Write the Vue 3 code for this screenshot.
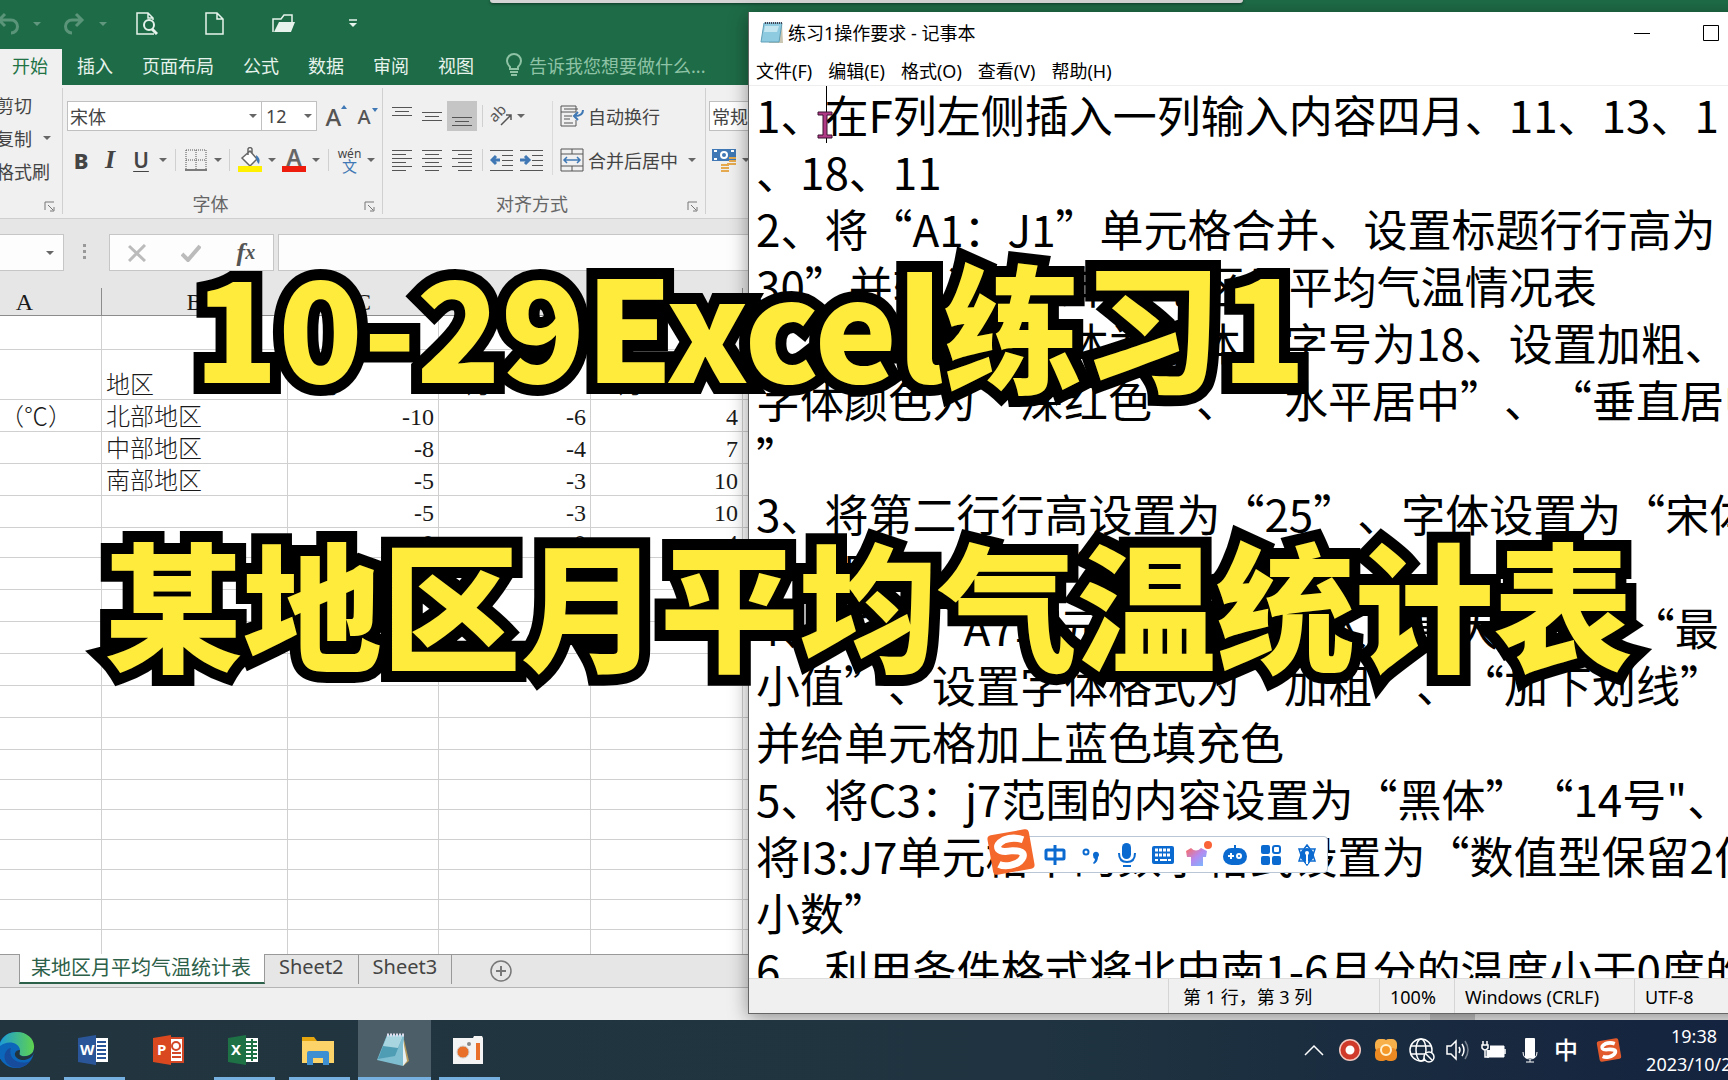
<script setup>
import { ref } from "vue";

const tabs = ["开始", "插入", "页面布局", "公式", "数据", "审阅", "视图"];
const activeTab = ref("开始");

const columns = [
  { name: "A", width: 154 },
  { name: "B", width: 186 },
  { name: "C", width: 151 },
  { name: "D", width: 152 },
  { name: "E", width: 152 },
  { name: "F", width: 152 },
];

const rows = [
  { height: 34, cells: [] },
  { height: 50, cells: ["", "地区", "一月", "二月", "三月"] },
  { height: 32, cells: ["气温（℃）", "北部地区", -10, -6, 4] },
  { height: 32, cells: ["", "中部地区", -8, -4, 7] },
  { height: 32, cells: ["", "南部地区", -5, -3, 10] },
  { height: 32, cells: ["", "", -5, -3, 10] },
  { height: 30, cells: ["", "", 0, 0, 4] },
  { height: 32, cells: [] },
  { height: 32, cells: [] },
  { height: 32, cells: [] },
  { height: 32, cells: [] },
  { height: 32, cells: [] },
  { height: 32, cells: [] },
  { height: 30, cells: [] },
  { height: 30, cells: [] },
  { height: 30, cells: [] },
  { height: 30, cells: [] },
  { height: 30, cells: [] },
  { height: 30, cells: [] },
  { height: 30, cells: [] },
];

const sheets = ["某地区月平均气温统计表", "Sheet2", "Sheet3"];
const activeSheet = ref(sheets[0]);

const menus = ["文件(F)", "编辑(E)", "格式(O)", "查看(V)", "帮助(H)"];

const note = ref(
  [
    "1、在F列左侧插入一列输入内容四月、11、13、1",
    "、18、11",
    "2、将“A1：J1”单元格合并、设置标题行行高为“",
    "30”并输入“某年某地区月平均气温情况表",
    "”、设置标题字体为宋体、字号为18、设置加粗、",
    "字体颜色为“深红色”、“水平居中”、“垂直居中",
    "”",
    "3、将第二行行高设置为“25”、字体设置为“宋体",
    "”、字号“16号”",
    "4、在A6、A7单元格内分别输入“最大值”、“最",
    "小值”、设置字体格式为“加粗”、“加下划线”",
    "并给单元格加上蓝色填充色",
    "5、将C3：j7范围的内容设置为“黑体”“14号\"、",
    "将I3:J7单元格中的数字格式设置为“数值型保留2位",
    "小数”",
    "6、利用条件格式将北中南1-6月分的温度小于0度的",
  ].join("\n")
);

const fontName = ref("宋体");
const fontSize = ref("12");
const numberFormat = ref("常规");
const formula = ref("");
const cellName = ref("");
</script>

<template>
  <div class="desktop">
    <main class="excel">
      <header class="excel-head">
        <div class="quick">
          <button aria-label="撤消">
            <svg width="34" height="24" class="dim"><path d="M9 8h11a6 6 0 0 1 0 13M14 2L8 8l6 6" fill="none" stroke="currentColor" stroke-width="3" /></svg>
          </button>
          <i class="arrow dim"></i>
          <button aria-label="恢复">
            <svg width="24" height="24" class="dim"><path d="M20 8H10a6 6 0 0 0 0 13M14 2l6 6-6 6" fill="none" stroke="currentColor" stroke-width="3" /></svg>
          </button>
          <i class="arrow dim"></i>
          <button aria-label="打印预览">
            <svg width="22" height="24" fill="none" stroke="currentColor" stroke-width="1.5"><path d="M17 8V6l-5-5H1v21h17M12 1v5h5" /><circle cx="13" cy="13" r="5" stroke-width="2" /><path d="M16 17l5 5" stroke-width="3" /></svg>
          </button>
          <button aria-label="新建">
            <svg width="20" height="24" fill="none" stroke="currentColor" stroke-width="1.5"><path d="M1 1h11l6 6v15H1zM12 1v6h6" /></svg>
          </button>
          <button aria-label="打开">
            <svg width="24" height="20"><path d="M1 18V5h8l3-4h8v7" fill="none" stroke="currentColor" stroke-width="1.5" /><path d="M2 18L7 8h16l-4 10z" fill="currentColor" /></svg>
          </button>
          <button aria-label="自定义快速访问工具栏">
            <svg width="10" height="10"><path d="M1 1h8" stroke="currentColor" stroke-width="1.5" /><path d="M1 4h8L5 8z" fill="currentColor" /></svg>
          </button>
        </div>
        <nav class="tabs">
          <button v-for="tab in tabs" :key="tab" class="tab" :class="{ active: tab === activeTab }" @click="activeTab = tab">{{ tab }}</button>
          <button class="tell-me">
            <svg width="18" height="24" fill="none" stroke="currentColor" stroke-width="2"><path d="M5 16v-2C3 12 2 10 2 8a7 7 0 0 1 14 0c0 2-1 4-3 6v2z" /><path d="M5 19h8M6 22h6" /></svg>
            告诉我您想要做什么...
          </button>
        </nav>
      </header>

      <section class="ribbon">
        <div class="group clipboard">
          <div class="clip-list">
            <button>剪切</button>
            <button>复制 <i class="arrow"></i></button>
            <button>格式刷</button>
          </div>
          <svg class="launcher" width="11" height="11"><path d="M1 9V1h9M4 4l5 5M10 6v4H6" /></svg>
        </div>

        <div class="group font">
          <div class="row">
            <label class="combo name"><input v-model="fontName" aria-label="字体" /><i class="arrow"></i></label>
            <label class="combo size"><input v-model="fontSize" aria-label="字号" /><i class="arrow"></i></label>
            <button class="grow" aria-label="增大字号">A<i class="up"></i></button>
            <button class="grow small" aria-label="减小字号">A<i class="down"></i></button>
          </div>
          <div class="row style-row">
            <button class="bold">B</button>
            <button class="italic">I</button>
            <button class="under">U</button>
            <i class="arrow"></i>
            <i class="sep"></i>
            <button aria-label="边框">
              <svg width="22" height="22" fill="none" stroke="#555"><path d="M1 1h20M1 1v20M21 1v20M11 1v20M1 11h20" stroke-dasharray="1 1" /><path d="M0 21h22" stroke-width="1.5" /></svg>
            </button>
            <i class="arrow"></i>
            <i class="sep"></i>
            <button aria-label="填充颜色">
              <svg width="26" height="26"><path d="M5 11l8-7 7 8-7 7zM11 8V2q2-3 4 0v4" fill="#fff" stroke="#666" stroke-width="1.5" /><path d="M19 8q5 3 3 9-3-2-3-9" fill="#3f78b4" /><path d="M1 19h24v6H1z" fill="#fff000" /></svg>
            </button>
            <i class="arrow"></i>
            <button class="color" aria-label="字体颜色">A</button>
            <i class="arrow"></i>
            <i class="sep"></i>
            <button class="pinyin"><span>wén</span><b>文</b></button>
            <i class="arrow"></i>
          </div>
          <div class="caption">字体</div>
          <svg class="launcher" width="11" height="11"><path d="M1 9V1h9M4 4l5 5M10 6v4H6" /></svg>
        </div>

        <div class="group align">
          <div class="row align-row">
            <button aria-label="顶端对齐"><svg width="20" height="22" class="lines"><path d="M0 2h20M3 6h14M0 10h20" /></svg></button>
            <button aria-label="垂直居中"><svg width="20" height="22" class="lines"><path d="M0 7h20M3 11h14M0 15h20" /></svg></button>
            <button class="pressed" aria-label="底端对齐"><svg width="20" height="22" class="lines"><path d="M0 12h20M3 16h14M0 20h20" /></svg></button>
            <i class="sep"></i>
            <button aria-label="方向">
              <svg width="24" height="24"><text x="1" y="14" transform="rotate(-45 9 12)" font-size="15" font-family="Noto Sans" fill="#555">ab</text><path d="M11 21L21 11M16 11h5v5" fill="none" stroke="#555" stroke-width="1.5" /></svg>
            </button>
            <i class="arrow"></i>
          </div>
          <div class="row align-row">
            <button aria-label="左对齐"><svg width="20" height="22" class="lines"><path d="M0 1h20M0 5h14M0 9h20M0 13h14M0 17h20M0 21h14" /></svg></button>
            <button aria-label="居中"><svg width="20" height="22" class="lines"><path d="M0 1h20M3 5h14M0 9h20M3 13h14M0 17h20M3 21h14" /></svg></button>
            <button aria-label="右对齐"><svg width="20" height="22" class="lines"><path d="M0 1h20M6 5h14M0 9h20M6 13h14M0 17h20M6 21h14" /></svg></button>
            <i class="sep"></i>
            <button aria-label="减少缩进"><svg width="24" height="22" class="lines"><path d="M0 1h23M12 6h11M12 11h11M12 16h11M0 21h23" /><path d="M10 11H2M6 7l-4 4 4 4" class="blue" /></svg></button>
            <button aria-label="增加缩进"><svg width="24" height="22" class="lines"><path d="M0 1h23M12 6h11M12 11h11M12 16h11M0 21h23" /><path d="M0 11h8M5 7l4 4-4 4" class="blue" /></svg></button>
          </div>
          <div class="wide">
            <button>
              <svg width="24" height="24" fill="none" stroke="#555"><path d="M1 2h15v6H1zM1 8v14h15v-6M4 5h14M4 12h8M4 15h6M4 19h9" /><path d="M23 6q0 6-8 6M18 8l-4 4 4 4" stroke="#3f78b4" stroke-width="2" /></svg>
              自动换行
            </button>
            <button>
              <svg width="24" height="24" fill="none" stroke="#555"><path d="M1 1h22v22H1zM1 6h22M1 18h22M12 1v5M12 18v5" /><path d="M4 12h16M7 9l-3 3 3 3M17 9l3 3-3 3" stroke="#3f78b4" stroke-width="1.5" /></svg>
              合并后居中 <i class="arrow"></i>
            </button>
          </div>
          <div class="caption">对齐方式</div>
          <svg class="launcher" width="11" height="11"><path d="M1 9V1h9M4 4l5 5M10 6v4H6" /></svg>
        </div>

        <div class="group number">
          <label class="combo"><input v-model="numberFormat" aria-label="数字格式" /></label>
          <button class="money" aria-label="会计数字格式">
            <svg width="24" height="24"><path d="M0 1h24v12H0z" fill="#3f78b4" /><path d="M2 3h3M19 3h3M2 11h3" stroke="#fff" stroke-width="2" /><circle cx="12" cy="7" r="4" fill="#fff" /><circle cx="12" cy="7" r="2" fill="#3f78b4" /><path d="M8 16h16v8H8z" fill="#f0f0f0" /><path d="M17 10h7M17 13h7M15 16h9M9 17h8M9 20h8M9 23h8" stroke="#e5a94f" stroke-width="2" /></svg>
            <i class="arrow"></i>
          </button>
        </div>
      </section>

      <section class="formula-bar">
        <label class="name-box"><input v-model="cellName" aria-label="名称框" /><i class="arrow"></i></label>
        <svg class="dots" width="4" height="18" fill="#999"><path d="M0 1h3v3H0zM0 7h3v3H0zM0 13h3v3H0z" /></svg>
        <div class="fx-buttons">
          <button aria-label="取消"><svg width="18" height="18"><path d="M1 2l16 15M17 1L1 17" stroke="#bbb" stroke-width="3" /></svg></button>
          <button aria-label="输入"><svg width="20" height="18"><path d="M1 10l6 6L19 2" fill="none" stroke="#bbb" stroke-width="4" /></svg></button>
          <button class="fx">f<sub>x</sub></button>
        </div>
        <input v-model="formula" class="formula" aria-label="编辑栏" />
      </section>

      <div class="sheet">
        <table>
          <colgroup>
            <col v-for="col in columns" :key="col.name" :style="{ width: col.width + 'px' }" />
          </colgroup>
          <thead>
            <tr>
              <th v-for="col in columns" :key="col.name">{{ col.name }}</th>
            </tr>
          </thead>
          <tbody>
            <tr v-for="(row, r) in rows" :key="r" :style="{ height: row.height + 'px' }">
              <td v-for="(col, c) in columns" :key="col.name" :class="{ num: typeof row.cells[c] === 'number' }">{{ row.cells[c] }}</td>
            </tr>
          </tbody>
        </table>
      </div>

      <nav class="sheet-tabs">
        <button v-for="sheet in sheets" :key="sheet" :class="{ active: sheet === activeSheet }" @click="activeSheet = sheet">{{ sheet }}</button>
        <button class="add" aria-label="新工作表">
          <svg width="22" height="22" fill="none" stroke="#777"><circle cx="11" cy="11" r="10" stroke-width="1.5" /><path d="M11 6v10M6 11h10" stroke-width="2" /></svg>
        </button>
      </nav>
      <footer class="excel-status"><i class="view"></i></footer>
    </main>

    <div class="share-bar"></div>

    <section class="notepad">
      <header class="note-title">
        <svg width="24" height="24"><path d="M5 3h17l1 19H9z" fill="#c9c5b0" /><path d="M4 2h18l-3 19H1z" fill="#8ecbe0" stroke="#5f9fb8" /><path d="M5 5h14l-2 6H4z" fill="#c4e6f0" /><path d="M5 2h17" stroke="#445" stroke-width="2" stroke-dasharray="1 1" /></svg>
        <h1>练习1操作要求 - 记事本</h1>
        <button aria-label="最小化"><svg width="16" height="16"><path d="M0 8.5h16" stroke="#000" /></svg></button>
        <button aria-label="最大化"><svg width="16" height="16"><path d="M.5.5h15v15H.5z" fill="none" stroke="#000" /></svg></button>
        <button aria-label="关闭"><svg width="16" height="16"><path d="M1 1l14 14M15 1L1 15" stroke="#000" /></svg></button>
      </header>
      <nav class="note-menu">
        <button v-for="menu in menus" :key="menu">{{ menu }}</button>
      </nav>
      <div class="note-body">
        <textarea v-model="note" wrap="off" spellcheck="false" aria-label="文本编辑器"></textarea>
        <i class="caret"></i>
        <svg class="ibeam" width="16" height="28"><path d="M1 1h14v3h-5v20h5v3H1v-3h5V4H1z" fill="#b03a86" stroke="#3a1030" /></svg>
      </div>
      <footer class="note-status">
        <span class="pos">第 1 行，第 3 列</span>
        <span class="zoom">100%</span>
        <span class="eol">Windows (CRLF)</span>
        <span class="enc">UTF-8</span>
      </footer>
    </section>

    <div class="ime">
      <svg class="sogou" width="50" height="48" viewBox="0 0 50 48"><g transform="rotate(-10 25 24)"><rect x="4" y="4" width="42" height="40" rx="4" fill="#f4682c" /><path d="M39 14Q30 9 20 11q-9 3-7 8 2 4 14 4 12 2 9 8-4 6-14 6-7 0-11-3" fill="none" stroke="#fff" stroke-width="7" /></g></svg>
      <button aria-label="中文"><svg width="22" height="22" fill="none" stroke="#0b6ad0" stroke-width="3"><rect x="2" y="6" width="18" height="9" rx="1" /><path d="M11 1v20" /></svg></button>
      <button aria-label="标点"><svg width="20" height="20"><circle cx="5" cy="7" r="2.5" fill="none" stroke="#0b6ad0" stroke-width="2" /><path d="M12 10a3 3 0 1 1 5 2q0 5-4 7l-1-1q2-2 2-4-2-1-2-4" fill="#0b6ad0" /></svg></button>
      <button aria-label="语音"><svg width="20" height="26"><rect x="5" y="1" width="9" height="16" rx="4.5" fill="#0b6ad0" /><path d="M2 11q0 9 8 9t8-9M6 24h8" fill="none" stroke="#0b6ad0" stroke-width="2" /></svg></button>
      <button aria-label="键盘"><svg width="24" height="20"><rect x="1" y="1" width="22" height="18" rx="2" fill="#0b6ad0" /><path d="M4 5h16M4 10h16" stroke="#fff" stroke-width="3" stroke-dasharray="3 1" /><path d="M4 15h3M9 15h7M17 15h3" stroke="#fff" stroke-width="2" /></svg></button>
      <button aria-label="皮肤">
        <svg width="28" height="28"><defs><linearGradient id="shirt" x1="0" y1="0" x2="1" y2="1"><stop offset="0" stop-color="#ff6a5e" /><stop offset=".5" stop-color="#b48af0" /><stop offset="1" stop-color="#6ec0ff" /></linearGradient></defs><path d="M1 10l5-3q5 5 10 0l6 3-1 6h-3v9H6v-9H2z" fill="url(#shirt)" /><circle cx="23" cy="4" r="4" fill="#fa6237" /></svg>
      </button>
      <button aria-label="游戏"><svg width="24" height="22"><path d="M12 1v4" stroke="#0b6ad0" stroke-width="2" /><rect x="0" y="4" width="24" height="17" rx="8.5" fill="#0b6ad0" /><path d="M5 12h6M8 9v6" stroke="#fff" stroke-width="2" /><circle cx="16" cy="12" r="2" fill="none" stroke="#fff" stroke-width="2" /></svg></button>
      <button aria-label="工具箱"><svg width="20" height="20" fill="#0b6ad0"><rect width="9" height="9" rx="2" /><rect y="11" width="9" height="9" rx="2" /><rect x="11" y="11" width="9" height="9" rx="2" /><rect x="12" y="1" width="7" height="7" rx="2" fill="none" stroke="#0b6ad0" stroke-width="2" /></svg></button>
      <button aria-label="智能助手"><svg width="22" height="22"><path d="M11 1l3 4h5l-2 6 2 6h-5l-3 4-3-4H3l2-6-2-6h5z" fill="none" stroke="#0b6ad0" stroke-width="1.5" /><circle cx="11" cy="11" r="7" fill="#0b6ad0" /><circle cx="11" cy="9" r="2" fill="#fff" /><path d="M11 10v10" stroke="#fff" stroke-width="2" /></svg></button>
    </div>

    <footer class="taskbar">
      <button class="task open" aria-label="Edge">
        <svg width="40" height="40"><defs><linearGradient id="edge" x1="0" y1="0" x2="1" y2="0"><stop offset="0" stop-color="#1c9ad8" /><stop offset="1" stop-color="#5fd34e" /></linearGradient></defs><circle cx="18" cy="20" r="18" fill="#0c66ba" /><path d="M1 17C3 7 10 2 19 2c10 0 18 7 17 16 0 6-6 9-12 8-4-1-2-3-2-6-1-9-15-10-21-3" fill="url(#edge)" /><path d="M13 18c-3 8 4 17 17 14l3-2c-5 8-16 10-22 5-7-5-5-16 2-17" fill="#174c9c" /><path d="M22 20c0 3-2 5 2 6 6 1 12-2 12-8v5c-3 7-12 9-17 5-4-3-2-8 3-8" fill="#22353f" /></svg>
      </button>
      <button class="task open" aria-label="Word">
        <svg width="32" height="32"><path d="M17 4h14v24H17z" fill="#fff" /><path d="M20 8h9M20 12h9M20 16h9M20 20h9M20 24h9" stroke="#2a5699" stroke-width="2" /><path d="M1 4l18-3v30L1 28z" fill="#2a5699" /><text x="3" y="21" class="logo">W</text></svg>
      </button>
      <button class="task" aria-label="PowerPoint">
        <svg width="32" height="32"><path d="M17 4h14v24H17z" fill="#fff" stroke="#d24726" stroke-width="2" /><path d="M20 19h9M20 23h9" stroke="#d24726" stroke-width="2" /><circle cx="24" cy="12" r="4" fill="none" stroke="#d24726" stroke-width="2" /><path d="M1 4l18-3v30L1 28z" fill="#d9481f" /><text x="5" y="21" class="logo">P</text></svg>
      </button>
      <button class="task open" aria-label="Excel">
        <svg width="32" height="32"><path d="M17 4h14v24H17z" fill="#fff" /><path d="M19 8h11M19 12h11M19 16h11M19 20h11M19 24h11M25 5v22" stroke="#1e7145" stroke-width="2" /><path d="M1 4l18-3v30L1 28z" fill="#1e7145" /><text x="4" y="21" class="logo">X</text></svg>
      </button>
      <button class="task open" aria-label="文件资源管理器">
        <svg width="34" height="30"><path d="M1 2h12l3 4h17v22H1z" fill="#e5a50f" /><path d="M1 6h32v22H1z" fill="#fcd368" /><path d="M6 30V18q0-2 2-2h18q2 0 2 2v12h-6v-7H12v7z" fill="#3d8fd1" /></svg>
      </button>
      <button class="task open current" aria-label="记事本">
        <svg width="36" height="36"><path d="M28 3l6 26-6 5z" fill="#b59a5c" /><path d="M12 3h17l-1 31-26-6z" fill="#7fbdd0" /><path d="M12 4h16l-8 20-17 3z" fill="#4f9db5" /><path d="M12 4h16l-5 12-15-2z" fill="#a9d5e0" /><path d="M28 8v26l4-5z" fill="#e8f1f2" /><path d="M12 3h18" stroke="#dde" stroke-width="3" stroke-dasharray="2 1" /></svg>
      </button>
      <button class="task open" aria-label="录屏">
        <svg width="32" height="30"><path d="M1 3h20l1-2h8l1 2v26H1z" fill="#f4f4f4" /><circle cx="11" cy="17" r="6" fill="#e8702a" stroke="#ccc" /><circle cx="17" cy="9" r="2" fill="#888" /><path d="M24 8h4v17h-4z" fill="#e8702a" /></svg>
      </button>
      <div class="tray">
        <button aria-label="显示隐藏的图标"><svg width="20" height="12"><path d="M1 11l9-9 9 9" fill="none" stroke="#fff" stroke-width="1.5" /></svg></button>
        <button aria-label="录制"><svg width="24" height="24"><circle cx="12" cy="12" r="11" fill="#f3c9c2" /><circle cx="12" cy="12" r="7" fill="#fff" stroke="#cf3a2a" stroke-width="5" /></svg></button>
        <button aria-label="壁纸"><svg width="24" height="24"><rect x="1" y="1" width="13" height="13" rx="5" fill="#f7b04a" /><rect x="10" y="1" width="13" height="13" rx="5" fill="#f7b04a" /><rect x="1" y="10" width="13" height="13" rx="5" fill="#ee8a22" /><rect x="10" y="10" width="13" height="13" rx="5" fill="#ee8a22" /><circle cx="12" cy="12" r="5" fill="#f59a2a" stroke="#fff0d0" stroke-width="2" /></svg></button>
        <button aria-label="网络"><svg width="26" height="26" fill="none" stroke="#fff" stroke-width="1.5"><circle cx="12" cy="13" r="11" /><ellipse cx="12" cy="13" rx="5" ry="11" /><path d="M2 9h20M2 17h20" /><circle cx="20" cy="20" r="5" fill="#16293f" /><path d="M17 17l6 6" /></svg></button>
        <button aria-label="音量"><svg width="24" height="22" fill="none" stroke="#fff" stroke-width="1.5"><path d="M1 7h4l5-5v18l-5-5H1zM13 8q2 3 0 6M16 5q4 6 0 12" /><path d="M19 2q6 9 0 18" opacity=".4" /></svg></button>
        <button aria-label="电源"><svg width="26" height="20"><path d="M6 6h17v11H6z" fill="#fff" stroke="#fff" /><path d="M24 9v5" stroke="#fff" stroke-width="1.5" /><path d="M0 4h9v6H0z" fill="#16293f" /><path d="M2 1v4M6 1v4M1 5h6v3q-3 4-6 0zM4 10v7h4" fill="none" stroke="#fff" stroke-width="1.5" /></svg></button>
        <button aria-label="麦克风"><svg width="16" height="26"><rect x="3" y="1" width="10" height="20" rx="1" fill="#fff" /><path d="M1 15q0 7 7 7t7-7M8 22v3M4 25h8" fill="none" stroke="#fff" /></svg></button>
        <button class="lang">中</button>
        <button class="tray-sogou" aria-label="搜狗输入法"><svg width="26" height="26" viewBox="0 0 50 48"><g transform="rotate(-10 25 24)"><rect x="4" y="4" width="42" height="40" rx="4" fill="#e25a2c" /><path d="M38 14Q30 9 20 11q-9 3-7 8 2 4 14 4 12 2 9 8-4 6-14 6-7 0-11-3" fill="none" stroke="#fff" stroke-width="7" /></g></svg></button>
        <div class="clock"><span>19:38</span><span>2023/10/29</span></div>
      </div>
    </footer>

    <div class="cover">
      <p class="first">10-29Excel练习1</p>
      <p>某地区月平均气温统计表</p>
    </div>
  </div>
</template>

<style>
body {
  margin: 0;
  overflow: hidden;
}
</style>

<style scoped>
.desktop {
  position: relative;
  display: flex;
  flex-direction: column;
  height: 100vh;
  overflow: hidden;
  background: #e6e6e6;
  font-family: "Noto Sans", "Noto Sans CJK SC", sans-serif;
  font-size: 18px;
  color: #444;
}

button,
input,
textarea {
  margin: 0;
  padding: 0;
  border: 0;
  outline: 0;
  background: none;
  color: inherit;
  font: inherit;
}

button {
  display: flex;
  align-items: center;
  justify-content: center;
  white-space: nowrap;
}

svg {
  flex: none;
}

/* excel sits partly beyond the left edge of the screen */
.excel {
  flex: 1;
  display: flex;
  flex-direction: column;
  min-height: 0;
  margin-left: -52px;
}

.excel-head {
  background: #1e6b47;
  color: #e6f3ec;
}

.quick {
  display: grid;
  grid-template-columns: 34px 24px 50px 8px 80px 56px 82px 56px;
  align-items: center;
  padding-left: 43px;
  height: 47px;
}

.quick .arrow {
  justify-self: center;
}

.dim {
  opacity: 0.3;
}

.arrow {
  width: 0;
  height: 0;
  border: 4px solid transparent;
  border-top-color: #666;
  border-bottom: 0;
}

.quick .arrow {
  border-top-color: #fff;
}

.tabs {
  display: flex;
  height: 36px;
  padding-top: 2px;
  padding-left: 42px;
}

.tab {
  padding: 0 14px 4px 15px;
}

.tab:first-child {
  padding: 0 14px 4px 22px;
}

.tab.active {
  background: #f0f0f0;
  color: #217346;
}

.tell-me {
  gap: 6px;
  margin-left: 17px;
  padding-bottom: 4px;
  color: #8fc3a6;
}

.ribbon {
  display: flex;
  height: 133px;
  background: #f0f0f0;
  border-bottom: 1px solid #cfcfcf;
}

.group {
  position: relative;
  box-sizing: border-box;
  height: 126px;
  margin-top: 3px;
  padding: 13px 4px 0;
  border-right: 1px solid #d0d0d0;
}

.clipboard {
  width: 115px;
  padding-top: 0;
  padding-left: 48px;
}

.clip-list button {
  height: 33px;
  gap: 11px;
}

.launcher {
  position: absolute;
  right: 7px;
  bottom: 2px;
  fill: none;
  stroke: #777;
}

.font {
  width: 320px;
}

.row {
  display: flex;
  align-items: center;
  height: 30px;
  margin-bottom: 14px;
}

.combo {
  box-sizing: border-box;
  display: flex;
  align-items: center;
  height: 30px;
  padding: 0 4px 0 2px;
  border: 1px solid #c0c0c0;
  background: #fff;
}

.combo input {
  flex: 1;
  width: 0;
}

.combo.name {
  width: 197px;
}

.combo.size {
  width: 56px;
  margin-left: -1px;
  padding-left: 4px;
}

.grow {
  position: relative;
  width: 28px;
  margin-left: 3px;
  font-size: 24px;
  font-weight: 500;
  color: #555;
}

.grow.small {
  font-size: 20px;
}

.up,
.down {
  position: absolute;
  top: 5px;
  right: 0;
  border: 3px solid transparent;
}

.up {
  border-bottom: 4px solid #3f78b4;
  border-top: 0;
}

.down {
  border-top: 4px solid #3f78b4;
  border-bottom: 0;
}

.style-row {
  display: grid;
  grid-template-columns: 28px 30px 32px 12px 12px 30px 14px 8px 34px 10px 34px 10px 14px 29px 14px;
  justify-items: center;
}

.bold {
  font-size: 22px;
  font-weight: 800;
}

.italic {
  font-family: "Liberation Serif", serif;
  font-size: 26px;
  font-weight: 700;
  font-style: italic;
}

.under {
  font-size: 21px;
  font-weight: 600;
  text-decoration: underline;
  text-underline-offset: 3px;
  text-decoration-thickness: 1px;
}

.sep {
  width: 1px;
  height: 22px;
  background: #d0d0d0;
}

.color {
  width: 24px;
  height: 24px;
  border-bottom: 6px solid #ee1c0c;
  box-sizing: border-box;
  font-size: 23px;
  font-weight: 600;
  line-height: 18px;
  color: #666;
}

.pinyin {
  flex-direction: column;
  font-size: 12px;
  line-height: 12px;
}

.pinyin b {
  font-size: 15px;
  font-weight: 400;
  color: #3f78b4;
}

.caption {
  height: 30px;
  margin-right: 24px;
  line-height: 30px;
  text-align: center;
  color: #666;
}

.align {
  width: 323px;
}

.align-row {
  display: grid;
  width: 162px;
  grid-template-columns: 30px 30px 30px 10px 30px 30px;
  justify-items: center;
}

.align-row .arrow {
  justify-self: start;
}

.align-row button {
  width: 30px;
  height: 30px;
}

.pressed {
  background: #c5c5c5;
}

.lines {
  fill: none;
  stroke: #555;
  stroke-width: 1;
  shape-rendering: crispEdges;
}

.lines .blue {
  stroke: #3f78b4;
  stroke-width: 3;
  shape-rendering: auto;
}

.wide {
  position: absolute;
  top: 13px;
  left: 169px;
  display: flex;
  flex-direction: column;
  align-items: flex-start;
  gap: 14px;
  padding-left: 7px;
  border-left: 1px solid #dadada;
}

.wide button {
  height: 30px;
  gap: 4px;
}

.wide .arrow {
  margin-left: 6px;
}

.number {
  width: 200px;
  padding-left: 3px;
}

.money {
  height: 30px;
  margin: 14px 0 0 3px;
  gap: 6px;
}

.formula-bar {
  display: flex;
  box-sizing: border-box;
  height: 69px;
  padding: 15px 0 17px;
}

.name-box,
.fx-buttons,
.formula {
  box-sizing: border-box;
  height: 37px;
  background: #fdfdfd;
  border: 1px solid #c6c6c6;
}

.name-box {
  display: flex;
  align-items: center;
  width: 116px;
  padding-right: 9px;
}

.name-box input {
  flex: 1;
  width: 0;
}

.dots {
  margin: 9px 22px 0 19px;
}

.fx-buttons {
  display: flex;
  width: 165px;
  margin-right: 4px;
}

.fx-buttons button {
  flex: 1;
}

.fx {
  font-family: "Liberation Serif", serif;
  font-style: italic;
  font-weight: 700;
  font-size: 26px;
  color: #555;
}

.fx sub {
  font-size: 20px;
  vertical-align: -2px;
}

.formula {
  flex: 1;
}

.sheet {
  flex: 1;
  min-height: 0;
  overflow: hidden;
  background: linear-gradient(#e6e6e6 28px, #fff 28px);
}

table {
  table-layout: fixed;
  width: 947px;
  border-collapse: separate;
  border-spacing: 0;
  font-family: "Liberation Serif", "Noto Sans CJK SC", serif;
  font-size: 24px;
  color: #1a1a1a;
  text-spacing-trim: space-all;
}

th,
td {
  box-sizing: border-box;
  padding: 0 4px;
  border-right: 1px solid #d0d0d0;
  border-bottom: 1px solid #d0d0d0;
  line-height: 28px;
  white-space: nowrap;
}

th {
  height: 28px;
  padding: 0;
  border-color: #8c8c8c;
  font-weight: 400;
  line-height: 26px;
}

td {
  vertical-align: bottom;
  text-align: left;
  font-weight: 300;
}

.num {
  text-align: right;
}

.sheet-tabs {
  display: flex;
  box-sizing: border-box;
  height: 34px;
  padding-left: 71px;
  border-top: 1px solid #999;
  border-bottom: 1px solid #b5b5b5;
  background: #e6e6e6;
}

.sheet-tabs button {
  align-items: flex-start;
  box-sizing: border-box;
  height: 29px;
  padding: 0 14px;
  border-right: 1px solid #999;
  font-size: 20px;
  line-height: 24px;
}

.sheet-tabs .active {
  align-items: center;
  margin-top: -1px;
  height: 30px;
  padding: 0 13px 0 11px;
  border-left: 1px solid #999;
  border-bottom: 2px solid #2c6048;
  background: #fff;
  color: #2c6048;
}

.sheet-tabs .add {
  align-items: center;
  height: 31px;
  margin-left: 24px;
  border: 0;
}

.excel-status {
  display: flex;
  justify-content: flex-end;
  height: 32px;
  padding-right: 253px;
  background: #f0f0f0;
}

.view {
  width: 45px;
  background: #c6c6c6;
}

.share-bar {
  position: absolute;
  top: 0;
  left: 490px;
  width: 753px;
  height: 3px;
  border-radius: 0 0 6px 6px;
  background: #d5d5d5;
  box-shadow: 0 1px 3px rgba(0, 0, 0, 0.5);
}

/* the notepad window runs past the right edge of the screen */
.notepad {
  position: absolute;
  top: 12px;
  right: -87px;
  bottom: 66px;
  left: 748px;
  display: flex;
  flex-direction: column;
  border: 1px solid #666;
  border-top: 0;
  background: #fff;
  color: #000;
  box-shadow: 0 4px 18px rgba(0, 0, 0, 0.4);
}

.note-title {
  display: flex;
  align-items: center;
  height: 42px;
  padding-left: 11px;
}

.note-title h1 {
  flex: 1;
  margin: 0 0 0 4px;
  font-size: 18px;
  font-weight: 400;
  line-height: 20px;
}

.note-title button {
  width: 69px;
  height: 42px;
}

.note-menu {
  display: flex;
  gap: 16px;
  height: 31px;
  padding-left: 7px;
  border-bottom: 1px solid #eee;
}

.note-body {
  position: relative;
  flex: 1;
  min-height: 0;
}

textarea {
  display: block;
  box-sizing: border-box;
  width: 100%;
  height: 100%;
  padding-left: 7px;
  overflow: hidden;
  resize: none;
  font-family: "Noto Sans CJK SC", sans-serif;
  font-size: 44px;
  line-height: 57px;
  text-spacing-trim: space-all;
}

.caret {
  position: absolute;
  top: 0;
  left: 77px;
  width: 1px;
  height: 57px;
  background: #000;
}

.ibeam {
  position: absolute;
  top: 25px;
  left: 68px;
}

.note-status {
  display: flex;
  justify-content: flex-end;
  height: 34px;
  background: #f0f0f0;
  border-top: 1px solid #ddd;
  line-height: 36px;
}

.note-status span {
  box-sizing: border-box;
  padding-left: 10px;
  border-left: 1px solid #d5d5d5;
}

.note-status .pos {
  width: 211px;
  padding-left: 14px;
}

.zoom {
  width: 75px;
}

.eol {
  width: 180px;
}

.enc {
  width: 180px;
}

.ime {
  position: absolute;
  top: 836px;
  left: 1010px;
  display: flex;
  box-sizing: border-box;
  height: 37px;
  padding: 0 2px 0 26px;
  border: 1px solid #b9c6d6;
  border-radius: 4px;
  background: #fff;
}

.ime button {
  width: 36px;
}

.sogou {
  position: absolute;
  top: -9px;
  left: -25px;
}

.taskbar {
  position: relative;
  display: flex;
  gap: 2px;
  height: 60px;
  background: linear-gradient(90deg, #22353f 0%, #1f3440 60%, #14233f 100%);
  color: #fff;
}

.task {
  position: relative;
  box-sizing: border-box;
  width: 73px;
  height: 60px;
  padding-right: 4px;
}

.task:first-child {
  margin-left: -17px;
}

.task.open::after {
  content: "";
  position: absolute;
  right: 6px;
  bottom: 0;
  left: 6px;
  height: 3px;
  background: #76b0e0;
}

.task.current {
  background: #4c5e68;
}

.task.current::after {
  right: 0;
  left: 0;
}

.logo {
  fill: #fff;
  font-family: "Noto Sans", sans-serif;
  font-size: 15px;
  font-weight: 700;
}

.tray {
  display: flex;
  margin-left: auto;
  margin-right: -26px;
}

.tray button {
  width: 36px;
}

.lang {
  font-size: 24px;
  font-weight: 500;
  line-height: 24px;
}

.tray .tray-sogou {
  width: 50px;
}

.clock {
  display: flex;
  flex-direction: column;
  align-items: center;
  width: 120px;
  padding-top: 2px;
  line-height: 28px;
}

.cover {
  position: absolute;
  top: 184px;
  left: 6%;
  color: #ffeb3b;
  font-family: "Noto Sans CJK SC", sans-serif;
  font-size: 139px;
  font-weight: 900;
  line-height: 278px;
  white-space: nowrap;
  -webkit-text-stroke: 22px #000;
  paint-order: stroke fill;
  pointer-events: none;
}

.cover p {
  margin: 0;
}

.cover .first {
  padding-left: 90px;
}
</style>
